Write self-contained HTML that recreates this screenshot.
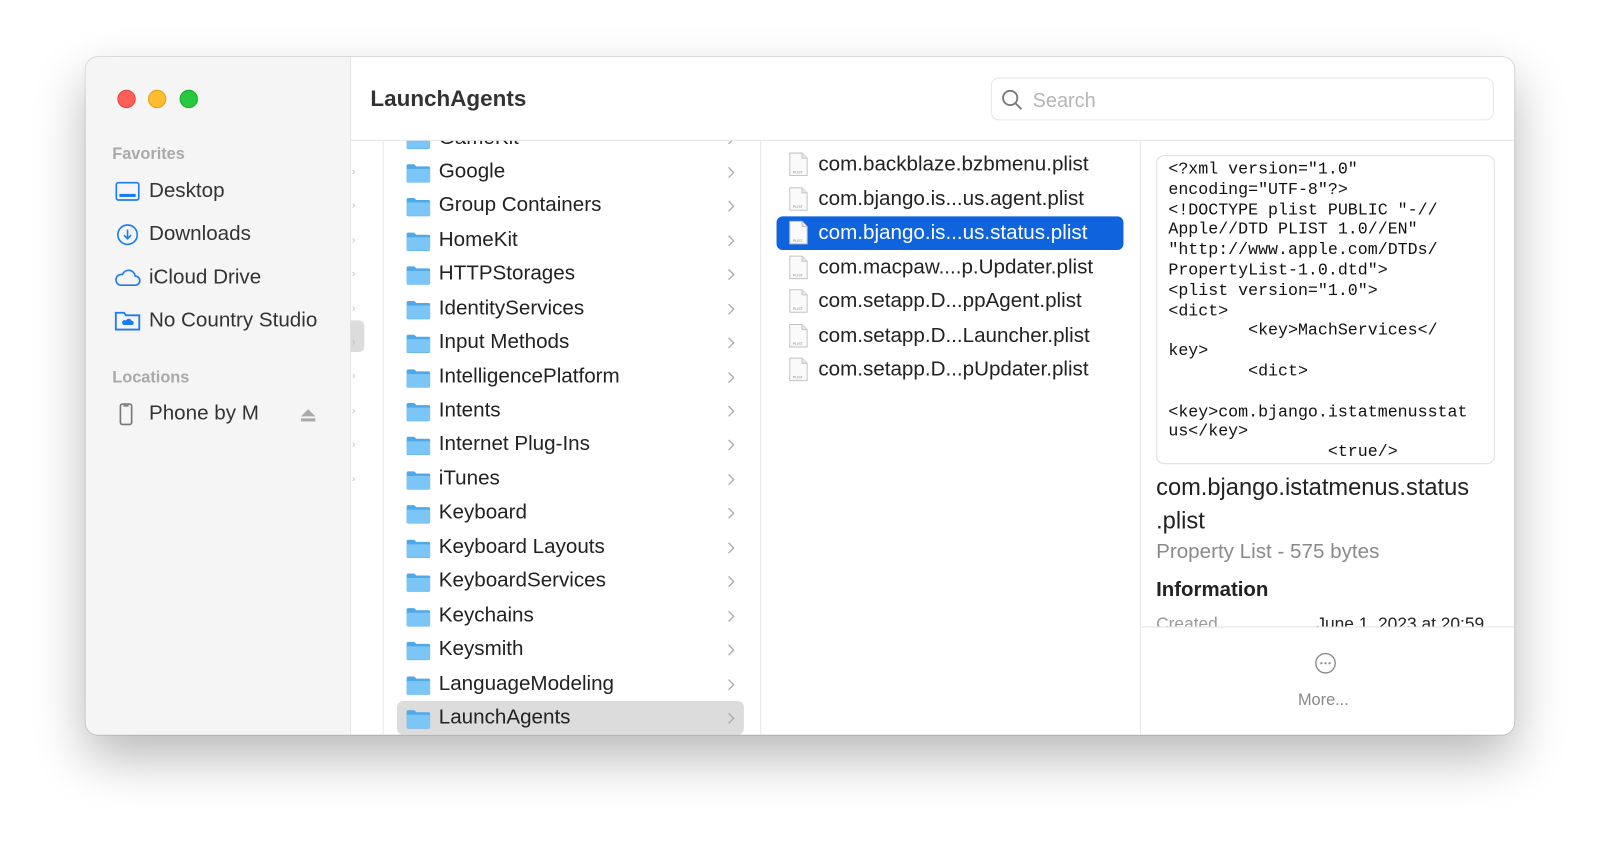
<!DOCTYPE html>
<html><head><meta charset="utf-8"><style>
*{box-sizing:border-box;margin:0;padding:0}
body{width:1600px;height:850px;background:#fff;font-family:"Liberation Sans",sans-serif;position:relative;overflow:hidden}
#wrap{position:absolute;left:0;top:0;width:1600px;height:850px;transform:scale(1.0204);transform-origin:0 0}
.win{position:absolute;left:84px;top:56px;width:1400px;height:664px;border-radius:12px;background:#fff;box-shadow:0 22px 50px rgba(0,0,0,.28),0 0 0 1px rgba(0,0,0,.12);overflow:hidden}
.side{position:absolute;left:0;top:0;width:260px;height:664px;background:#f5f5f5;border-right:1px solid #e2e2e2}
.a{position:absolute;white-space:nowrap}
.dot{position:absolute;top:32px;width:18px;height:18px;border-radius:50%}
.sh{color:#a9a9a9;font-size:16px;font-weight:bold}
.si{font-size:20.2px;color:#333}
.hdr{position:absolute;left:260px;top:0;right:0;height:82px;border-bottom:1px solid #e4e4e4;background:#fff}
.row{position:absolute;left:305px;width:340px;height:33px;font-size:20.2px;color:#222}
.row .t{position:absolute;left:41px;top:5px}
.fold{position:absolute;left:9px;top:8px;width:24px;height:19px}
.chev{position:absolute;left:324px;top:11px;width:7px;height:12px}
.f{position:absolute;left:677px;width:340px;height:33px;font-size:20.2px;color:#222}
.f .t{position:absolute;left:41px;top:5px}
.pl{position:absolute;left:12px;top:4px;width:19px;height:24px}
.mono{font-family:"Liberation Mono",monospace;font-size:16.3px;line-height:19.8px;color:#111;white-space:pre}
</style></head><body>
<div id="wrap">
<div class="win">
 <div class="side">
  <div class="dot" style="left:31px;background:#fe5f57;border:1px solid #e2463f"></div>
  <div class="dot" style="left:61px;background:#febc2e;border:1px solid #e1a116"></div>
  <div class="dot" style="left:92px;background:#28c840;border:1px solid #14ae2a"></div>
  <div class="a sh" style="left:26px;top:87px">Favorites</div>
  <svg class="a" style="left:29px;top:122px" width="24" height="20" viewBox="0 0 24 20"><rect x="1" y="1" width="22" height="17" rx="2" fill="none" stroke="#1a7cf5" stroke-width="1.6"/><rect x="4" y="12" width="16" height="3" fill="#1a7cf5"/></svg>
  <div class="a si" style="left:62px;top:120px">Desktop</div>
  <svg class="a" style="left:30px;top:163px" width="22" height="22" viewBox="0 0 22 22"><circle cx="11" cy="11" r="9.5" fill="none" stroke="#1a7cf5" stroke-width="1.6"/><path d="M11 6v9M7.5 11.5 11 15l3.5-3.5" fill="none" stroke="#1a7cf5" stroke-width="1.6"/></svg>
  <div class="a si" style="left:62px;top:162px">Downloads</div>
  <svg class="a" style="left:28px;top:207px" width="26" height="18" viewBox="0 0 26 18"><path d="M6 16.5h14.5a4.5 4.5 0 0 0 0-9 6.5 6.5 0 0 0-12.5-1.5A5 5 0 0 0 6 16.5z" fill="none" stroke="#1a7cf5" stroke-width="1.6"/></svg>
  <div class="a si" style="left:62px;top:205px">iCloud Drive</div>
  <svg class="a" style="left:28px;top:247px" width="26" height="22" viewBox="0 0 26 22"><path d="M1.5 3.5h8l2 2.5h13v14h-23z" fill="none" stroke="#1a7cf5" stroke-width="1.8"/><path d="M9 15.5h8a2 2 0 0 0 0-4 3 3 0 0 0-5.5-.5A2.3 2.3 0 0 0 9 15.5z" fill="#1a7cf5"/></svg>
  <div class="a si" style="left:62px;top:247px">No Country Studio</div>
  <div class="a sh" style="left:26px;top:306px">Locations</div>
  <svg class="a" style="left:33px;top:339px" width="13" height="22" viewBox="0 0 13 22"><rect x="1" y="1" width="11" height="20" rx="2" fill="none" stroke="#777" stroke-width="1.6"/><rect x="4" y="2" width="5" height="1.5" fill="#777"/></svg>
  <div class="a si" style="left:62px;top:338px">Phone by M</div>
  <svg class="a" style="left:210px;top:344px" width="16" height="14" viewBox="0 0 16 14"><path d="M8 1 15 8H1z" fill="#aaa"/><rect x="1" y="10" width="14" height="3" fill="#aaa"/></svg>
 </div>
 <div class="hdr">
  <div class="a" style="left:19px;top:28px;font-size:22px;font-weight:bold;color:#333">LaunchAgents</div>
  <div class="a" style="left:627px;top:20px;width:493px;height:42px;border:1px solid #e6e6e6;border-radius:8px;background:#fff"></div>
  <svg class="a" style="left:637px;top:31px" width="22" height="22" viewBox="0 0 22 22"><circle cx="9" cy="9" r="7" fill="none" stroke="#777" stroke-width="1.8"/><path d="M14 14l6 6" stroke="#777" stroke-width="1.8"/></svg>
  <div class="a" style="left:668px;top:32px;font-size:19.5px;color:#b5b5b5">Search</div>
 </div>
 <div class="a" style="left:291px;top:82px;width:1px;height:582px;background:#e8e8e8"></div>
 <div class="a" style="left:661px;top:82px;width:1px;height:582px;background:#e8e8e8"></div>
 <div class="a" style="left:1033px;top:82px;width:1px;height:582px;background:#e8e8e8"></div>
 <div class="a" style="left:260px;top:258px;width:13px;height:31px;background:#dcdcdc;border-radius:0 5px 5px 0"></div>
 <div class="a" style="left:261px;top:96px;color:#bbb;font-size:10px;line-height:33.4px">›<br>›<br>›<br>›<br>›<br>›<br>›<br>›<br>›<br>›</div>
 <div id="c2"></div>
 <div id="c3"></div>
 <div class="a" style="left:1049px;top:96px;width:332px;height:303px;border:1px solid #dedede;border-radius:8px;background:#fff;overflow:hidden">
  <div class="a mono" style="left:11px;top:3px">&lt;?xml version="1.0"
encoding="UTF-8"?&gt;
&lt;!DOCTYPE plist PUBLIC "-//
Apple//DTD PLIST 1.0//EN"
"http://www.apple.com/DTDs/
PropertyList-1.0.dtd"&gt;
&lt;plist version="1.0"&gt;
&lt;dict&gt;
        &lt;key&gt;MachServices&lt;/
key&gt;
        &lt;dict&gt;

&lt;key&gt;com.bjango.istatmenusstat
us&lt;/key&gt;
                &lt;true/&gt;</div>
 </div>
 <div class="a" style="left:1049px;top:405px;font-size:23.2px;color:#222;line-height:33px">com.bjango.istatmenus.status<br>.plist</div>
 <div class="a" style="left:1049px;top:474px;font-size:20.2px;color:#8a8a8a">Property List - 575 bytes</div>
 <div class="a" style="left:1049px;top:511px;font-size:20px;font-weight:bold;color:#222">Information</div>
 <div class="a" style="left:1034px;top:500px;width:366px;height:58px;overflow:hidden">
  <div class="a" style="left:15px;top:46px;font-size:17px;color:#999">Created</div>
  <div class="a" style="left:172px;top:46px;font-size:17px;color:#222">June 1, 2023 at 20:59</div>
 </div>
 <div class="a" style="left:1034px;top:558px;width:366px;height:1px;background:#e2e2e2"></div>
 <svg class="a" style="left:1204px;top:583px" width="22" height="22" viewBox="0 0 22 22"><circle cx="11" cy="11" r="9.5" fill="none" stroke="#888" stroke-width="1.3"/><circle cx="7" cy="11" r="1.1" fill="#888"/><circle cx="11" cy="11" r="1.1" fill="#888"/><circle cx="15" cy="11" r="1.1" fill="#888"/></svg>
 <div class="a" style="left:1188px;top:622px;font-size:16px;color:#888">More...</div>
</div>
</div>
<script>
var folders=["GameKit","Google","Group Containers","HomeKit","HTTPStorages","IdentityServices","Input Methods","IntelligencePlatform","Intents","Internet Plug-Ins","iTunes","Keyboard","Keyboard Layouts","KeyboardServices","Keychains","Keysmith","LanguageModeling","LaunchAgents"];
var fsvg='<svg class="fold" viewBox="0 0 24 19"><path d="M0.5 2.5a1.5 1.5 0 0 1 1.5-1.5h6l2 2h12a1.5 1.5 0 0 1 1.5 1.5v13a1.5 1.5 0 0 1-1.5 1.5H2a1.5 1.5 0 0 1-1.5-1.5z" fill="#4fa9e8"/><path d="M0.5 5.5h23v11.5a1.5 1.5 0 0 1-1.5 1.5H2a1.5 1.5 0 0 1-1.5-1.5z" fill="#7cc6f7"/></svg>';
var chev='<svg class="chev" viewBox="0 0 7 12"><path d="M1 1l5 5-5 5" fill="none" stroke="#aaa" stroke-width="1.3"/></svg>';
var h='<div class="a" style="left:292px;top:82px;width:369px;height:582px;overflow:hidden"><div class="a" style="left:-292px;top:-82px;width:1000px;height:700px">';
folders.forEach(function(n,i){var top=62.5+i*33.44;var sel=(n=="LaunchAgents");
h+='<div class="row" style="top:'+top+'px;'+(sel?'background:#dcdcdc;border-radius:6px;':'')+'">'+fsvg+'<span class="t">'+n+'</span>'+chev+'</div>';});
h+='</div></div>';
document.getElementById('c2').innerHTML=h;
var files=["com.backblaze.bzbmenu.plist","com.bjango.is...us.agent.plist","com.bjango.is...us.status.plist","com.macpaw....p.Updater.plist","com.setapp.D...ppAgent.plist","com.setapp.D...Launcher.plist","com.setapp.D...pUpdater.plist"];
var g='';
files.forEach(function(n,i){var top=89+i*33.5;var sel=i==2;
g+='<div class="f" style="top:'+top+'px;'+(sel?'background:#0f63dc;border-radius:6px;color:#fff;':'')+'"><svg class="pl" viewBox="0 0 19 24"><path d="M1 1h12l5 5v17H1z" fill="#fafafa" stroke="#c4c4c4"/><path d="M13 1v5h5" fill="#e8e8e8" stroke="#c4c4c4"/><text x="4" y="21" font-size="3.5" fill="#888" font-family="Liberation Sans">PLIST</text></svg><span class="t">'+n+'</span></div>';});
document.getElementById('c3').innerHTML=g;
</script>
</body></html>
